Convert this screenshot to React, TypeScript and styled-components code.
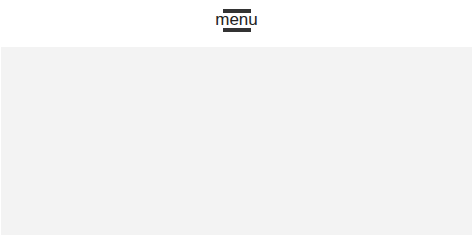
import React from "react";
import styled, { createGlobalStyle } from "styled-components";

const GlobalStyle = createGlobalStyle`
  html, body {
    margin: 0;
    padding: 0;
    background: #ffffff;
    font-family: "Liberation Sans", Arial, sans-serif;
  }
`;

const Page = styled.div`
  display: flex;
  flex-direction: column;
  width: 474px;
  height: 237px;
`;

const Header = styled.header`
  display: flex;
  justify-content: center;
  align-items: flex-start;
  height: 47px;
  padding-top: 9px;
  padding-right: 1px;
  box-sizing: border-box;
`;

const MenuButton = styled.button`
  display: inline-flex;
  flex-direction: column;
  align-items: center;
  background: none;
  border: none;
  padding: 0;
  cursor: pointer;
  color: #222;
`;

const Bar = styled.span<{ $gap?: number }>`
  display: block;
  width: 28px;
  height: 4px;
  margin-top: ${(p) => p.$gap ?? 0}px;
  background: #333333;
`;

const Label = styled.span`
  display: block;
  font-family: "Liberation Sans", Arial, sans-serif;
  font-size: 17px;
  line-height: 13px;
  color: #222222;
`;

const Content = styled.main`
  flex: 0 0 188px;
  margin: 0 2px 0 1px;
  background: #f3f3f3;
`;

export default function App() {
  return (
    <>
      <GlobalStyle />
      <Page>
        <Header>
          <MenuButton>
            <Bar />
            <Label>menu</Label>
            <Bar $gap={2} />
          </MenuButton>
        </Header>
        <Content />
      </Page>
    </>
  );
}
